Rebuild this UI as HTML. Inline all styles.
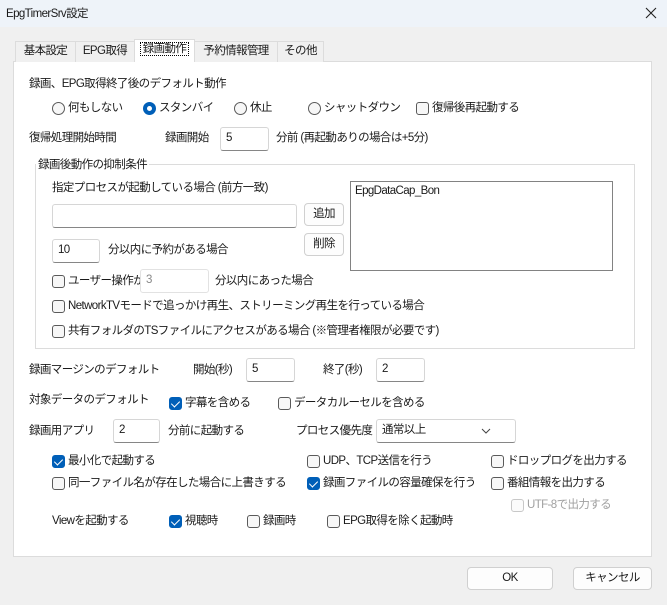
<!DOCTYPE html>
<html><head><meta charset="utf-8"><style>
*{box-sizing:border-box;margin:0;padding:0}
body{width:667px;height:605px;background:#f0f0f0;font-family:"Liberation Sans","Noto Sans CJK JP",sans-serif;font-size:11.5px;letter-spacing:-0.6px;color:#1a1a1a;position:relative;overflow:hidden}
.a{position:absolute;white-space:nowrap;line-height:16px}
.t{position:absolute;white-space:nowrap;line-height:16px;transform:translateY(-8px)}
.title{position:absolute;left:0;top:0;width:667px;height:27px;background:#eef3f9}
.page{position:absolute;left:13px;top:61px;width:639px;height:496px;background:#fff;border:1px solid #dcdcdc}
.tab{position:absolute;top:41px;height:21px;background:#f0f0f0;border:1px solid #dcdcdc;border-bottom:none;text-align:center;line-height:19px}
.tab.sel{top:39px;height:23px;background:#fff;z-index:2}
.in{position:absolute;background:#fff;border:1px solid #d6d6d6;border-bottom:1px solid #868686;border-radius:3px;padding-left:5px;line-height:21px}
.btn{position:absolute;background:#fdfdfd;border:1px solid #d0d0d0;border-radius:4px;text-align:center;line-height:20px}
.cb{position:absolute;width:13px;height:13px;border:1px solid #5a5a5a;border-radius:3px;background:#f7f7f7}
.cb.on{background:#005fb8;border-color:#005fb8}
.cb.on::after{content:"";position:absolute;left:3px;top:1px;width:4px;height:7px;border:solid #fff;border-width:0 1.3px 1.3px 0;transform:rotate(45deg)}
.cb.dis{border-color:#c8c8c8;background:#fbfbfb}
.rd{position:absolute;width:13px;height:13px;border:1px solid #5a5a5a;border-radius:50%;background:#f7f7f7}
.rd.on{background:#fff;border:4px solid #005fb8}
</style></head><body>
<div class="title"></div>
<div class="a" style="left:6px;top:6px">EpgTimerSrv設定</div>
<svg style="position:absolute;left:645px;top:7px" width="12" height="12"><path d="M1 1L11 11M11 1L1 11" stroke="#222" stroke-width="1.1"/></svg>
<div class="page"></div>
<div class="tab" style="left:15px;width:61px">基本設定</div>
<div class="tab" style="left:75px;width:60px">EPG取得</div>
<div class="tab sel" style="left:134px;width:61px"><span style="border:1px dotted #000;padding:0 2px">録画動作</span></div>
<div class="tab" style="left:194px;width:84px">予約情報管理</div>
<div class="tab" style="left:277px;width:47px">その他</div>

<div class="t" style="left:29px;top:84px">録画、EPG取得終了後のデフォルト動作</div>
<div class="rd" style="left:52px;top:102px"></div><div class="t" style="left:68px;top:108px">何もしない</div>
<div class="rd on" style="left:143px;top:102px"></div><div class="t" style="left:159px;top:108px">スタンバイ</div>
<div class="rd" style="left:234px;top:102px"></div><div class="t" style="left:250px;top:108px">休止</div>
<div class="rd" style="left:308px;top:102px"></div><div class="t" style="left:324px;top:108px">シャットダウン</div>
<div class="cb" style="left:416px;top:102px"></div><div class="t" style="left:432px;top:108px">復帰後再起動する</div>

<div class="t" style="left:29px;top:138px">復帰処理開始時間</div>
<div class="t" style="left:165px;top:138px">録画開始</div>
<div class="in" style="left:220px;top:127px;width:49px;height:24px">5</div>
<div class="t" style="left:276px;top:138px">分前 (再起動ありの場合は+5分)</div>

<div style="position:absolute;left:35px;top:164px;width:600px;height:185px;border:1px solid #dcdcdc"></div>
<div class="t" style="left:36px;top:165px;background:#fff;padding:0 2px">録画後動作の抑制条件</div>
<div class="t" style="left:52px;top:188px">指定プロセスが起動している場合 (前方一致)</div>
<div class="in" style="left:52px;top:204px;width:245px;height:24px"></div>
<div class="btn" style="left:304px;top:203px;width:40px;height:23px">追加</div>
<div class="btn" style="left:304px;top:233px;width:40px;height:23px">削除</div>
<div style="position:absolute;left:350px;top:181px;width:263px;height:90px;border:1px solid #828282;background:#fff"></div>
<div class="t" style="left:355px;top:191px">EpgDataCap_Bon</div>
<div class="in" style="left:52px;top:239px;width:48px;height:24px">10</div>
<div class="t" style="left:108px;top:250px">分以内に予約がある場合</div>
<div class="cb" style="left:52px;top:275px"></div><div class="t" style="left:68px;top:281px">ユーザー操作が</div>
<div class="in" style="left:140px;top:269px;width:69px;height:24px;border-color:#e2e2e2;color:#888">3</div>
<div class="t" style="left:215px;top:281px">分以内にあった場合</div>
<div class="cb" style="left:52px;top:300px"></div><div class="t" style="left:68px;top:306px">NetworkTVモードで追っかけ再生、ストリーミング再生を行っている場合</div>
<div class="cb" style="left:52px;top:325px"></div><div class="t" style="left:68px;top:331px">共有フォルダのTSファイルにアクセスがある場合 (※管理者権限が必要です)</div>

<div class="t" style="left:29px;top:370px">録画マージンのデフォルト</div>
<div class="t" style="left:193px;top:370px">開始(秒)</div>
<div class="in" style="left:246px;top:358px;width:49px;height:24px">5</div>
<div class="t" style="left:323px;top:370px">終了(秒)</div>
<div class="in" style="left:376px;top:358px;width:49px;height:24px">2</div>

<div class="t" style="left:29px;top:400px">対象データのデフォルト</div>
<div class="cb on" style="left:169px;top:397px"></div><div class="t" style="left:185px;top:403px">字幕を含める</div>
<div class="cb" style="left:278px;top:397px"></div><div class="t" style="left:294px;top:403px">データカルーセルを含める</div>

<div class="t" style="left:29px;top:431px">録画用アプリ</div>
<div class="in" style="left:113px;top:419px;width:47px;height:24px">2</div>
<div class="t" style="left:168px;top:431px">分前に起動する</div>
<div class="t" style="left:296px;top:431px">プロセス優先度</div>
<div class="in" style="left:376px;top:419px;width:140px;height:24px">通常以上</div>
<svg style="position:absolute;left:481px;top:428px" width="10" height="6"><path d="M1 1L5 5L9 1" stroke="#444" fill="none"/></svg>

<div class="cb on" style="left:52px;top:455px"></div><div class="t" style="left:68px;top:461px">最小化で起動する</div>
<div class="cb" style="left:307px;top:455px"></div><div class="t" style="left:323px;top:461px">UDP、TCP送信を行う</div>
<div class="cb" style="left:491px;top:455px"></div><div class="t" style="left:507px;top:461px">ドロップログを出力する</div>
<div class="cb" style="left:52px;top:477px"></div><div class="t" style="left:68px;top:483px">同一ファイル名が存在した場合に上書きする</div>
<div class="cb on" style="left:307px;top:477px"></div><div class="t" style="left:323px;top:483px">録画ファイルの容量確保を行う</div>
<div class="cb" style="left:491px;top:477px"></div><div class="t" style="left:507px;top:483px">番組情報を出力する</div>
<div class="cb dis" style="left:511px;top:499px"></div><div class="t" style="left:527px;top:505px;color:#a0a0a0">UTF-8で出力する</div>

<div class="t" style="left:52px;top:521px">Viewを起動する</div>
<div class="cb on" style="left:169px;top:515px"></div><div class="t" style="left:185px;top:521px">視聴時</div>
<div class="cb" style="left:247px;top:515px"></div><div class="t" style="left:263px;top:521px">録画時</div>
<div class="cb" style="left:327px;top:515px"></div><div class="t" style="left:343px;top:521px">EPG取得を除く起動時</div>

<div class="btn" style="left:467px;top:567px;width:86px;height:23px">OK</div>
<div class="btn" style="left:573px;top:567px;width:79px;height:23px">キャンセル</div>
</body></html>
